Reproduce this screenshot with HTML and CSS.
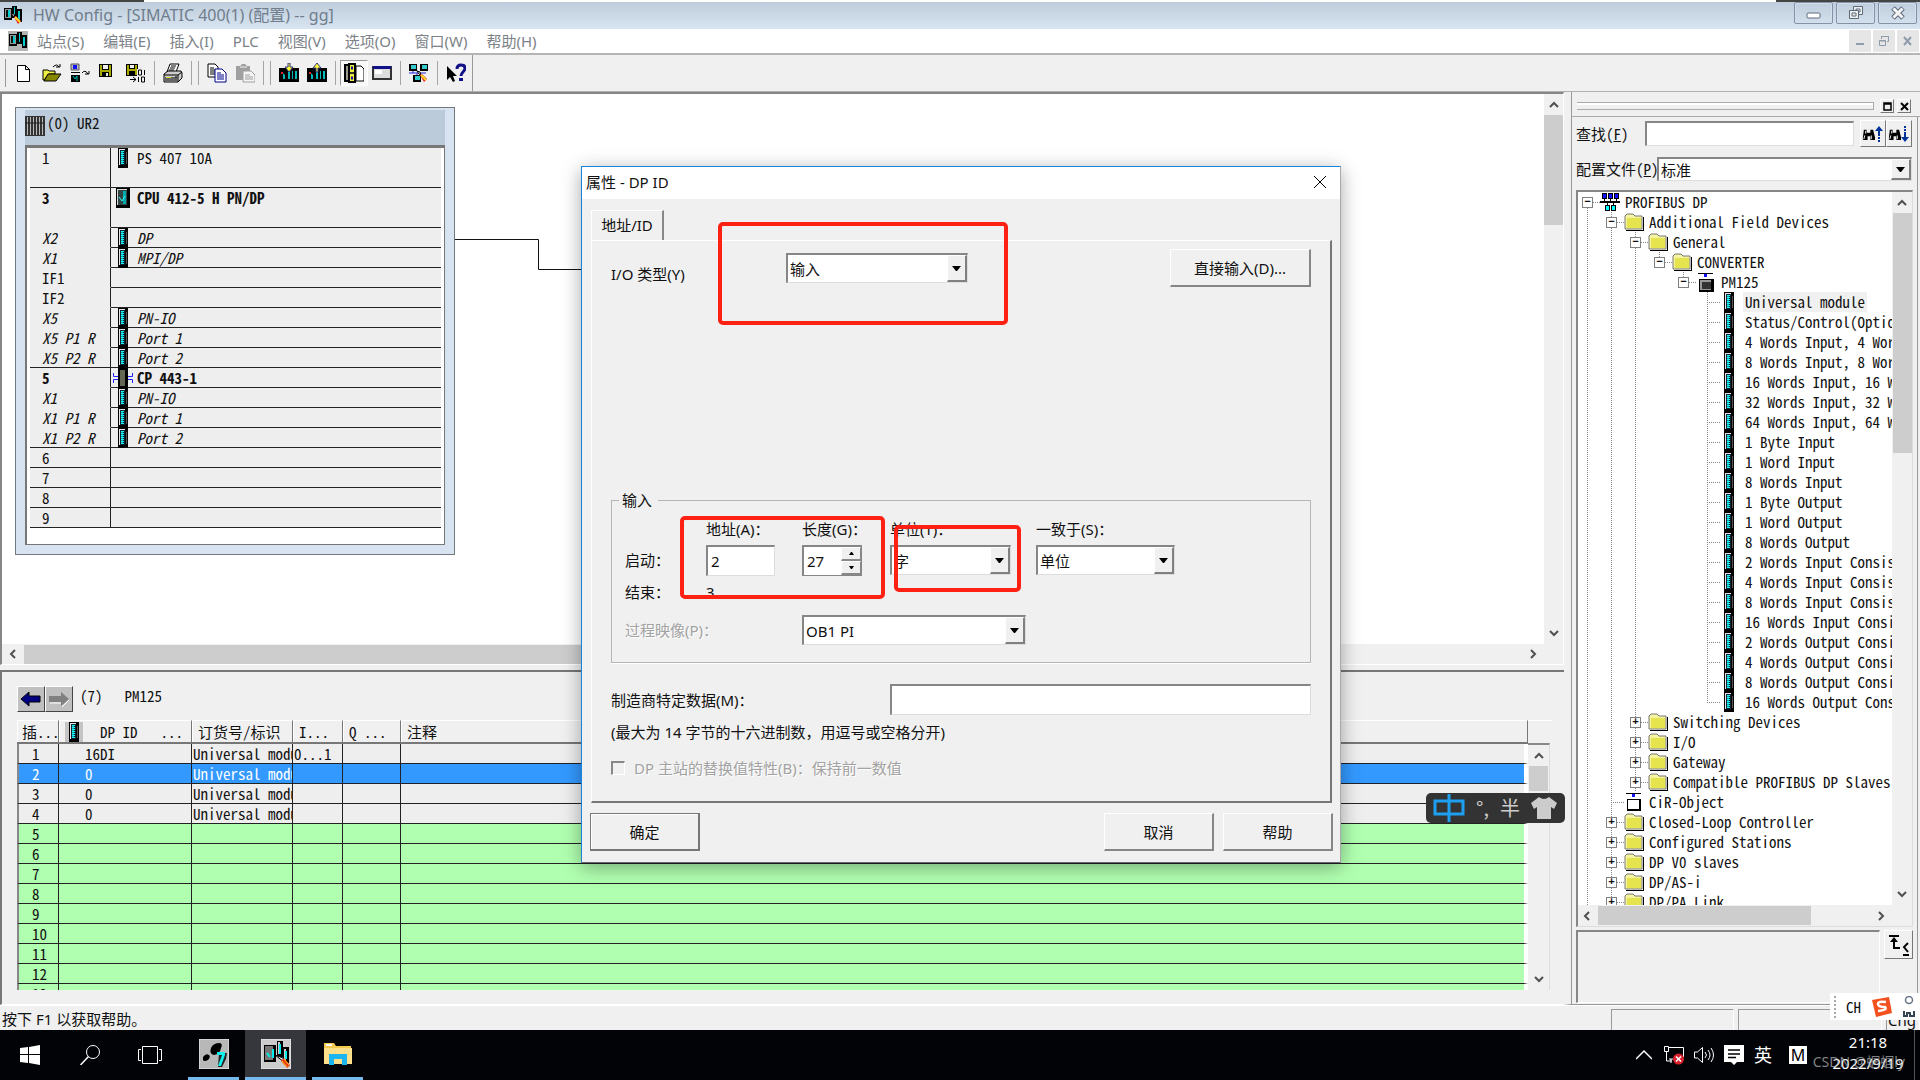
FILE: index.html
```html
<!DOCTYPE html>
<html lang="zh-CN">
<head>
<meta charset="utf-8">
<title>HW Config</title>
<link rel="stylesheet" href="styles.css">
</head>
<body>
<svg class="defs" aria-hidden="true">
  <symbol id="module" viewBox="0 0 10 20"><path d="M0 0h10v20H0z"/><path d="M1 1h6v16H1z" fill="#e8e8e8"/><path d="M2 2h5v15H2z" fill="#123"/><path d="M3 3h3v1H3zm0 2h3v1H3zm0 2h3v1H3zm0 2h3v1H3zm0 2h3v1H3zm0 2h3v1H3zm0 2h3v1H3z" fill="#1ff"/><path d="M3 4h2v1H3zm0 2h2v1H3zm0 2h2v1H3zm0 2h2v1H3zm0 2h2v1H3zm0 2h2v1H3z" fill="#1aa5a5"/><path d="M8 4h1v12H8z" fill="#555"/></symbol>
  <symbol id="cpu" viewBox="0 0 14 20"><path d="M0 0h14v20H0z"/><path d="M1 1h10v16H1z" fill="#d8d8d8"/><path d="M2 2h9v15H2z" fill="#344"/><path d="M7 3h3v13H7z" fill="#0aa"/><path d="M3 9l3 4 3-5" fill="none" stroke="#3ff" stroke-width="1"/></symbol>
  <symbol id="cp" viewBox="0 0 20 20"><path d="M0.500 5v3.500H5M0.500 15v-3.500H5M19.500 5v3.500H15M19.500 15v-3.500H15" fill="none" stroke="#22f" stroke-width="1"/><path d="M5 0h10v20H5z"/><path d="M7 2h5v16H7z" fill="#665"/></symbol>
  <symbol id="folder" viewBox="0 0 20 20"><path d="M2 18h17V5h1v14H2z"/><path d="M1 17V4l2-2h6l2 2h7v13z" fill="#f5f3a0" stroke="#777"/><path d="M3 6h14v10H3z" fill="#e5e34e"/></symbol>
  <symbol id="dpnet" viewBox="0 0 20 20"><path d="M2 1h5v6H2zM8 1h5v6H8zM14 1h5v6h-5zM0 9h20v2H0zM4 7h1v3H4zm6 0h1v3h-1zm6 0h1v3h-1zM7 11h1v3H7zm6 0h1v3h-1zM5 13h5v6H5zm6 0h5v6h-5z"/><path d="M3 2h3v4H3zM9 2h3v4H9zM15 2h3v4h-3z" fill="#11f"/><path d="M6 14h3v4H6zM12 14h3v4h-3z" fill="#0ff"/></symbol>
  <symbol id="slave" viewBox="0 0 20 20"><path d="M2 1h15v1H2zM3 7h15v13H3z"/><path d="M8 2h3v3H8z" fill="#11f"/><path d="M4 8h11v10H4z" fill="#999"/><path d="M6 10h9v7H6z" fill="#333"/></symbol>
  <symbol id="cir" viewBox="0 0 20 20"><path d="M2 1h15v1H2zM3 7h14v12H3z"/><path d="M8 2h3v3H8z" fill="#11f"/><path d="M4 8h11v9H4z" fill="#fff"/></symbol>
  <symbol id="up" viewBox="0 0 10 8"><path d="M1 6l4-4 4 4" fill="none" stroke="#505050" stroke-width="2"/></symbol>
  <symbol id="down" viewBox="0 0 10 8"><path d="M1 2l4 4 4-4" fill="none" stroke="#505050" stroke-width="2"/></symbol>
  <symbol id="left" viewBox="0 0 8 10"><path d="M6 1L2 5l4 4" fill="none" stroke="#505050" stroke-width="2"/></symbol>
  <symbol id="right" viewBox="0 0 8 10"><path d="M2 1l4 4-4 4" fill="none" stroke="#505050" stroke-width="2"/></symbol>
  <symbol id="drop" viewBox="0 0 9 5"><path d="M0 0h9L5 5H4z"/></symbol>
  <symbol id="hw" viewBox="0 0 20 20"><path d="M1 3h8v12H1zM9 1h5v12H9zM14 4h5v13h-5z"/><path d="M2 4h6v9H2z" fill="#999"/><path d="M3 5h4v7H3z" fill="#111"/><path d="M5 5h2v7H5zM11 2h1v9h-1zM15 6h2v9h-2z" fill="#0cc"/></symbol>
  <symbol id="pencil" viewBox="0 0 20 20"><path d="M8 8l3 1 1 3-2-1z" fill="#fff" stroke="#000"/><path d="M11 12l2-1 5 5-3 3z" fill="#e22"/><path d="M12 12l5 5" stroke="#fd2" stroke-width="2"/></symbol>
  <symbol id="chips" viewBox="0 0 20 14"><path d="M0 0h20v14H0z"/><path d="M2 4h2v2H2z" fill="#e22"/><path d="M4 5l2 2v4H4zM9 4h2v7H9zM13 3h1v8h-1zM16 3h2v8h-2z" fill="#0bb"/></symbol>
  <symbol id="glass" viewBox="0 0 14 14"><path d="M2 2h3v3h4V2h3l2 8v3H9V9H6v4H1v-3z"/><path d="M3 8l-1 4M10 8v4M4 3v3" stroke="#fff"/></symbol>
</svg>

<div class="app">
  <header class="titlebar">
    <svg class="i20" viewBox="0 0 20 20"><use href="#hw"/><use href="#pencil"/></svg>
    <h1>HW Config - [SIMATIC 400(1) (配置) -- gg]</h1>
    <div class="caption">
      <button aria-label="最小化"><svg width="16" height="14" viewBox="0 0 16 14"><rect x="1" y="7" width="13" height="5" rx="1" fill="#fff" stroke="#5d6b7b"/></svg></button>
      <button aria-label="还原"><svg width="16" height="14" viewBox="0 0 16 14" fill="#eee" stroke="#5d6b7b"><path d="M5.500.5h9v8h-9z"/><path d="M8 3h4v3H8z"/><path d="M1.500 4.500h9v8h-9z"/><path d="M4 7h4v3H4z"/></svg></button>
      <button aria-label="关闭"><svg width="16" height="14" viewBox="0 0 16 14"><path d="M3 2l10 10M13 2L3 12" stroke="#5d6b7b" stroke-width="5"/><path d="M3.500 2.500l9 9M12.500 2.500l-9 9" stroke="#f4f4f4" stroke-width="3"/></svg></button>
    </div>
  </header>

  <nav class="menubar">
    <svg class="menuicon" viewBox="0 0 20 20"><path d="M0 0h20v20H0z" fill="#b4b4b4"/><use href="#hw"/></svg>
    <a href="#">站点(S)</a><a href="#">编辑(E)</a><a href="#">插入(I)</a><a href="#">PLC</a><a href="#">视图(V)</a><a href="#">选项(O)</a><a href="#">窗口(W)</a><a href="#">帮助(H)</a>
    <div class="mdi">
      <button aria-label="最小化窗口"><svg width="12" height="12" viewBox="0 0 12 12"><path d="M2 8h8v2H2z" fill="#8e9cab"/></svg></button>
      <button aria-label="还原窗口"><svg width="12" height="12" viewBox="0 0 12 12" fill="none" stroke="#8e9cab"><path d="M3.500 4V1.500h7v5H9M3 1.500h8M1.500 5.500h6v5h-6zM1 6h7"/></svg></button>
      <button aria-label="关闭窗口"><svg width="12" height="12" viewBox="0 0 12 12"><path d="M2 2l7 8M9 2l-7 8" stroke="#8e9cab" stroke-width="2"/></svg></button>
    </div>
  </nav>

  <div class="toolbar" role="toolbar">
    <button aria-label="新建"><svg class="i20" viewBox="0 0 20 20"><path d="M3.500 2.500h8l4 4v12h-12zM11.500 2.500v4h4" fill="#fff" stroke="#000"/></svg></button>
    <button aria-label="打开"><svg class="i20" viewBox="0 0 20 20"><path d="M1 7h5l1 1h6v3H7l-5 6H1z" fill="#ee4" stroke="#000"/><path d="M2 18l4-7h13l-5 7z" fill="#880" stroke="#000"/><path d="M11 4q4-4 6 0M14 4h4V1" fill="none" stroke="#000"/></svg></button>
    <button aria-label="在线打开"><svg class="i20" viewBox="0 0 20 20"><path d="M1 1h8v6H1z" fill="#bbb" stroke="#555"/><path d="M3 2h4v4H3z" fill="#11f"/><path d="M1 9h9v1H1zM1 12h9v7H1z"/><path d="M3 13l2 3 2-3v5" stroke="#0bb" fill="none"/><path d="M12 10q3-4 6 1M15 11h4V8" fill="none" stroke="#000"/></svg></button>
    <button aria-label="保存"><svg class="i20" viewBox="0 0 20 20"><path d="M1 1h13v13H1z"/><path d="M2 2h11v11H2z" fill="#aa0"/><path d="M4 1h7v6H4zM4 9h7v5H4z"/><path d="M5 2h5v4H5zM8 10h2v3H8z" fill="#eee"/></svg></button>
    <button aria-label="保存并编译"><svg class="i20" viewBox="0 0 20 20"><path d="M0 1h12v12H0z"/><path d="M1 2h10v10H1z" fill="#aa0"/><path d="M3 1h6v5H3zM3 8h6v5H3z"/><path d="M4 2h4v3H4z" fill="#eee"/><path d="M11 6h9v14h-9z" fill="#f0f0f0"/><path d="M12.500 7h3v5h-3zM18.500 7v5M12.500 14v5M15.500 14h3v5h-3zM4 16.500h6M7 14l3 2.500L7 19" fill="none" stroke="#000"/></svg></button>
    <i class="sep"></i>
    <button aria-label="打印"><svg class="i20" viewBox="0 0 20 20"><path d="M7 1h9l-3 8H4z" fill="#fff" stroke="#000"/><path d="M8 3h5M7 5h5M6 7h5" stroke="#000"/><path d="M1 11l4-3h13l1 2v5l-4 4H1z" fill="#ccc" stroke="#000"/><path d="M1 12h14l4-3M15 12v7M2 15h12M2 17h12M12 14h2" stroke="#000" fill="none"/><path d="M3 14h5v1H3z" fill="#dd2"/></svg></button>
    <i class="sep double"></i>
    <button aria-label="复制"><svg class="i20" viewBox="0 0 20 20"><path d="M1 1h7l3 3v10H1z" fill="#fff" stroke="#000"/><path d="M3 5h4M3 7h6M3 9h6M3 11h5" stroke="#000"/><path d="M8 6h7l4 4v9H8z" fill="#fff" stroke="#008" /><path d="M10 10h4M10 12h7M10 14h7M10 16h7" stroke="#008"/></svg></button>
    <button aria-label="粘贴" disabled><svg class="i20" viewBox="0 0 20 20"><path d="M1 3h4l2-2h3l2 2h3v14H1z" fill="#a0a0a0"/><path d="M5 4h7" stroke="#eee"/><path d="M8 8h8l4 4v7H8z" fill="#f4f4f4" stroke="#a0a0a0"/><path d="M10 12h5M10 14h8M10 16h8" stroke="#a0a0a0"/></svg></button>
    <i class="sep double"></i>
    <button aria-label="下载"><svg class="i20" viewBox="0 0 20 20"><use href="#chips" y="5" width="20" height="14"/><path d="M9 0h2v4h3l-4 5-4-5h3z" fill="#ff3" stroke="#338"/></svg></button>
    <button aria-label="上传"><svg class="i20" viewBox="0 0 20 20"><use href="#chips" y="5" width="20" height="14"/><path d="M9 9h2V5h3l-4-5-4 5h3z" fill="#ff3" stroke="#338"/></svg></button>
    <i class="sep"></i>
    <button class="pressed" aria-label="目录"><svg class="i20" viewBox="0 0 20 20"><path d="M1 2h4v16H1z" fill="#998" stroke="#000" stroke-width="2"/><path d="M5 1h6v18H5z" fill="#ee3" stroke="#000" stroke-width="2"/><path d="M7 5h2M7 15h2" stroke="#11a" stroke-width="3"/><path d="M6 9h4v2H6z" fill="#333"/><path d="M12 3h5l3 3v12h-8z" fill="#fff" stroke="#000"/></svg></button>
    <button aria-label="窗口"><svg class="i20" viewBox="0 0 20 20"><path d="M1 4h18v12H1z" fill="#ddd" stroke="#333" stroke-width="2"/><path d="M1 3h18v3H1z" fill="#118"/><path d="M3 7h7v4H3z" fill="#fff"/></svg></button>
    <i class="sep"></i>
    <button aria-label="网络"><svg class="i20" viewBox="0 0 20 20"><path d="M0 1h8v7H0zM11 1h8v7h-8zM4 12h8v7H4z"/><path d="M2 2h5v4H2zM13 2h5v4h-5zM6 13h5v4H6z" fill="#3cc"/><path d="M0 10h17M8 10v2M4 8v2" stroke="#22d"/><use href="#pencil"/></svg></button>
    <i class="sep"></i>
    <button aria-label="帮助"><svg class="i20" viewBox="0 0 20 20"><path d="M1 3v14l3-3 3 5 2-1-2-5h4z"/><path d="M11 6q0-4 4-4t4 3q0 2-2 4t-2 4" fill="none" stroke="#118" stroke-width="3"/><path d="M13 15h4v3h-4z" fill="#118"/></svg></button>
  </div>

  <div class="main">
    <div class="left">
      <section class="station">
        <div class="canvas">
          <svg class="bus" viewBox="0 0 130 40"><path d="M0 5.500h84.500v30H130" fill="none" stroke="#111"/></svg>
          <div class="rack">
            <div class="racktitle"><svg width="20" height="20" viewBox="0 0 20 20"><path d="M0 0h20v20H0z" fill="#333"/><path d="M2.500 1v18M5.500 1v18M8.500 1v18M11.500 1v18M14.500 1v18M17.500 1v18" stroke="#bbb"/><path d="M0 7h20" stroke="#222"/></svg><span>(0) UR2</span></div>
            <div class="rackbody">
              <table>
                <tr class="tall end"><td>1</td><td><svg class="mod"><use href="#module"/></svg>PS 407 10A</td></tr>
                <tr class="tall b"><td>3</td><td><svg class="mod"><use href="#cpu"/></svg>CPU 412-5 H PN/DP</td></tr>
                <tr class="it"><td>X2</td><td><svg class="mod"><use href="#module"/></svg>DP</td></tr>
                <tr class="it"><td>X1</td><td><svg class="mod"><use href="#module"/></svg>MPI/DP</td></tr>
                <tr><td>IF1</td><td></td></tr>
                <tr><td>IF2</td><td></td></tr>
                <tr class="it"><td>X5</td><td><svg class="mod"><use href="#module"/></svg>PN-IO</td></tr>
                <tr class="it"><td>X5 P1 R</td><td><svg class="mod"><use href="#module"/></svg>Port 1</td></tr>
                <tr class="it end"><td>X5 P2 R</td><td><svg class="mod"><use href="#module"/></svg>Port 2</td></tr>
                <tr class="b"><td>5</td><td><svg class="mod"><use href="#cp"/></svg>CP 443-1</td></tr>
                <tr class="it"><td>X1</td><td><svg class="mod"><use href="#module"/></svg>PN-IO</td></tr>
                <tr class="it"><td>X1 P1 R</td><td><svg class="mod"><use href="#module"/></svg>Port 1</td></tr>
                <tr class="it end"><td>X1 P2 R</td><td><svg class="mod"><use href="#module"/></svg>Port 2</td></tr>
                <tr class="end"><td>6</td><td></td></tr>
                <tr class="end"><td>7</td><td></td></tr>
                <tr class="end"><td>8</td><td></td></tr>
                <tr class="end"><td>9</td><td></td></tr>
              </table>
            </div>
          </div>
        </div>
        <div class="vbar"><svg class="va"><use href="#up"/></svg><div class="thumb t110"></div><svg class="va last"><use href="#down"/></svg></div>
        <div class="hbar"><svg class="ha"><use href="#left"/></svg><div class="thumb wide"></div><svg class="ha last"><use href="#right"/></svg></div>
      </section>

      <section class="detail">
        <div class="nav">
          <button aria-label="后退"><svg width="20" height="16" viewBox="0 0 20 16"><path d="M0 8l8-7v4h11v6H8v4z" fill="#000080" stroke="#000"/></svg></button>
          <button aria-label="前进"><svg width="20" height="16" viewBox="0 0 20 16"><path d="M20 8l-8-7v4H0v6h12v4z" fill="#808080"/><path d="M20 9l-7 7M1 12h11" stroke="#fff"/></svg></button>
          <span>(7)</span><span>PM125</span>
        </div>
        <div class="list">
          <div class="listview">
            <table>
              <colgroup><col class="c1"><col class="c2"><col class="c3"><col class="c4"><col class="c5"><col></colgroup>
              <thead><tr><th>插...</th><th><span class="dpid"><svg class="hm"><use href="#module"/></svg><span>DP ID</span><span>...</span></span></th><th>订货号/标识</th><th>I...</th><th>Q ...</th><th>注释</th></tr></thead>
              <tbody>
                <tr><td>1</td><td>16DI</td><td>Universal module</td><td>0...1</td><td></td><td></td></tr>
                <tr class="sel"><td>2</td><td>0</td><td>Universal module</td><td></td><td></td><td></td></tr>
                <tr><td>3</td><td>0</td><td>Universal module</td><td></td><td></td><td></td></tr>
                <tr><td>4</td><td>0</td><td>Universal module</td><td></td><td></td><td></td></tr>
                <tr class="g"><td>5</td><td></td><td></td><td></td><td></td><td></td></tr>
                <tr class="g"><td>6</td><td></td><td></td><td></td><td></td><td></td></tr>
                <tr class="g"><td>7</td><td></td><td></td><td></td><td></td><td></td></tr>
                <tr class="g"><td>8</td><td></td><td></td><td></td><td></td><td></td></tr>
                <tr class="g"><td>9</td><td></td><td></td><td></td><td></td><td></td></tr>
                <tr class="g"><td>10</td><td></td><td></td><td></td><td></td><td></td></tr>
                <tr class="g"><td>11</td><td></td><td></td><td></td><td></td><td></td></tr>
                <tr class="g"><td>12</td><td></td><td></td><td></td><td></td><td></td></tr>
                <tr class="g"><td>13</td><td></td><td></td><td></td><td></td><td></td></tr>
              </tbody>
            </table>
          </div>
          <div class="listbar"><div class="vbar"><svg class="va"><use href="#up"/></svg><div class="thumb t25"></div><svg class="va last"><use href="#down"/></svg></div></div>
        </div>
      </section>
    </div>

    <aside class="catalog">
      <div class="grip"><div class="bars"></div>
        <button aria-label="停靠"><svg width="9" height="9" viewBox="0 0 9 9"><path d="M1 1h7v7H1zM1 2h7" fill="none" stroke="#000" stroke-width="1.500"/></svg></button>
        <button aria-label="关闭目录"><svg width="9" height="9" viewBox="0 0 9 9"><path d="M1 1l7 7M8 1L1 8" stroke="#000" stroke-width="2"/></svg></button>
      </div>
      <div class="catbody">
        <div class="find"><label for="find">查找(<u>F</u>)</label><input id="find" type="text">
          <button aria-label="向上查找"><svg width="22" height="18" viewBox="0 0 22 18"><use href="#glass" y="3" width="13" height="13"/><path d="M17 1l4 5h-3v5h-2V6h-3zM16 12h2v2h-2zM16 15h2v2h-2z" fill="#039"/></svg></button><button aria-label="向下查找"><svg width="22" height="18" viewBox="0 0 22 18"><use href="#glass" y="3" width="13" height="13"/><path d="M17 17l4-5h-3V7h-2v5h-3zM16 1h2v2h-2zM16 4h2v2h-2z" fill="#039"/></svg></button></div>
        <div class="profile"><label for="prof">配置文件(<u>P</u>)</label><span class="combo"><select id="prof"><option>标准</option></select><i><svg width="9" height="5"><use href="#drop"/></svg></i></span></div>
        <div class="treebox">
          <div class="treeview">
            <ul class="tree">
              <li><div class="row"><b class="ex">−</b><i class="dots"></i><svg class="ti"><use href="#dpnet"/></svg><span>PROFIBUS DP</span></div>
                <ul>
                  <li><div class="row"><b class="ex">−</b><i class="dots"></i><svg class="ti"><use href="#folder"/></svg><span>Additional Field Devices</span></div>
                    <ul>
                      <li><div class="row"><b class="ex">−</b><i class="dots"></i><svg class="ti"><use href="#folder"/></svg><span>General</span></div>
                        <ul class="only">
                          <li><div class="row"><b class="ex">−</b><i class="dots"></i><svg class="ti"><use href="#folder"/></svg><span>CONVERTER</span></div>
                            <ul class="only">
                              <li><div class="row"><b class="ex">−</b><i class="dots"></i><svg class="ti"><use href="#slave"/></svg><span>PM125</span></div>
                                <ul class="leaves">
                                  <li class="row"><i class="dots"></i><svg class="tm"><use href="#module"/></svg><span class="cur">Universal module</span></li>
                                  <li class="row"><i class="dots"></i><svg class="tm"><use href="#module"/></svg><span>Status/Control(Optional)</span></li>
                                  <li class="row"><i class="dots"></i><svg class="tm"><use href="#module"/></svg><span>4 Words Input, 4 Words Output</span></li>
                                  <li class="row"><i class="dots"></i><svg class="tm"><use href="#module"/></svg><span>8 Words Input, 8 Words Output</span></li>
                                  <li class="row"><i class="dots"></i><svg class="tm"><use href="#module"/></svg><span>16 Words Input, 16 Words Output</span></li>
                                  <li class="row"><i class="dots"></i><svg class="tm"><use href="#module"/></svg><span>32 Words Input, 32 Words Output</span></li>
                                  <li class="row"><i class="dots"></i><svg class="tm"><use href="#module"/></svg><span>64 Words Input, 64 Words Output</span></li>
                                  <li class="row"><i class="dots"></i><svg class="tm"><use href="#module"/></svg><span>1 Byte Input</span></li>
                                  <li class="row"><i class="dots"></i><svg class="tm"><use href="#module"/></svg><span>1 Word Input</span></li>
                                  <li class="row"><i class="dots"></i><svg class="tm"><use href="#module"/></svg><span>8 Words Input</span></li>
                                  <li class="row"><i class="dots"></i><svg class="tm"><use href="#module"/></svg><span>1 Byte Output</span></li>
                                  <li class="row"><i class="dots"></i><svg class="tm"><use href="#module"/></svg><span>1 Word Output</span></li>
                                  <li class="row"><i class="dots"></i><svg class="tm"><use href="#module"/></svg><span>8 Words Output</span></li>
                                  <li class="row"><i class="dots"></i><svg class="tm"><use href="#module"/></svg><span>2 Words Input Consistent</span></li>
                                  <li class="row"><i class="dots"></i><svg class="tm"><use href="#module"/></svg><span>4 Words Input Consistent</span></li>
                                  <li class="row"><i class="dots"></i><svg class="tm"><use href="#module"/></svg><span>8 Words Input Consistent</span></li>
                                  <li class="row"><i class="dots"></i><svg class="tm"><use href="#module"/></svg><span>16 Words Input Consistent</span></li>
                                  <li class="row"><i class="dots"></i><svg class="tm"><use href="#module"/></svg><span>2 Words Output Consistent</span></li>
                                  <li class="row"><i class="dots"></i><svg class="tm"><use href="#module"/></svg><span>4 Words Output Consistent</span></li>
                                  <li class="row"><i class="dots"></i><svg class="tm"><use href="#module"/></svg><span>8 Words Output Consistent</span></li>
                                  <li class="row"><i class="dots"></i><svg class="tm"><use href="#module"/></svg><span>16 Words Output Consistent</span></li>
                                </ul>
                              </li>
                            </ul>
                          </li>
                        </ul>
                      </li>
                      <li class="row"><b class="ex">+</b><i class="dots"></i><svg class="ti"><use href="#folder"/></svg><span>Switching Devices</span></li>
                      <li class="row"><b class="ex">+</b><i class="dots"></i><svg class="ti"><use href="#folder"/></svg><span>I/O</span></li>
                      <li class="row"><b class="ex">+</b><i class="dots"></i><svg class="ti"><use href="#folder"/></svg><span>Gateway</span></li>
                      <li class="row"><b class="ex">+</b><i class="dots"></i><svg class="ti"><use href="#folder"/></svg><span>Compatible PROFIBUS DP Slaves</span></li>
                    </ul>
                  </li>
                  <li class="row"><i class="dots solo"></i><svg class="ti"><use href="#cir"/></svg><span>CiR-Object</span></li>
                  <li class="row"><b class="ex">+</b><i class="dots"></i><svg class="ti"><use href="#folder"/></svg><span>Closed-Loop Controller</span></li>
                  <li class="row"><b class="ex">+</b><i class="dots"></i><svg class="ti"><use href="#folder"/></svg><span>Configured Stations</span></li>
                  <li class="row"><b class="ex">+</b><i class="dots"></i><svg class="ti"><use href="#folder"/></svg><span>DP V0 slaves</span></li>
                  <li class="row"><b class="ex">+</b><i class="dots"></i><svg class="ti"><use href="#folder"/></svg><span>DP/AS-i</span></li>
                  <li class="row"><b class="ex">+</b><i class="dots"></i><svg class="ti"><use href="#folder"/></svg><span>DP/PA Link</span></li>
                </ul>
              </li>
            </ul>
          </div>
          <div class="vbar"><svg class="va"><use href="#up"/></svg><div class="thumb t240"></div><svg class="va last"><use href="#down"/></svg></div>
          <div class="hbar"><svg class="ha"><use href="#left"/></svg><div class="thumb w213"></div><svg class="ha last"><use href="#right"/></svg></div>
        </div>
        <div class="info"><div class="infotext"></div><button aria-label="切换目录"><svg width="22" height="22" viewBox="0 0 22 22"><path d="M1 1h10v2H1zM6 3l4 5H7v5h5v2H5V8H2z"/><path d="M20 9l-4 4 4 5M15 21h6" fill="none" stroke="#000" stroke-width="2"/></svg></button></div>
      </div>
    </aside>
  </div>

  <footer class="status"><span>按下 F1 以获取帮助。</span><div class="cell s1"></div><div class="cell s2"></div><div class="cell s3">Chg</div></footer>

  <div class="taskbar">
    <button class="tb" aria-label="开始"><svg width="20" height="20" viewBox="0 0 20 20"><path d="M0 3l8-1v7H0zM9 2l11-2v9H9zM0 10h8v8l-8-1zM9 10h11v10L9 18z" fill="#fff"/></svg></button>
    <button class="tb" aria-label="搜索"><svg width="20" height="20" viewBox="0 0 20 20"><circle cx="13" cy="7" r="6.500" fill="none" stroke="#fff"/><path d="M8.500 11.500L.5 20" stroke="#fff" stroke-width="1.500"/></svg></button>
    <button class="tb" aria-label="任务视图"><svg width="24" height="20" viewBox="0 0 24 20"><path d="M4.500 1.500h15v17h-15zM3 4.500H.5v11H3M21 4.500h2.500v11H21" fill="none" stroke="#fff"/></svg></button>
    <button class="tb run first" aria-label="SIMATIC Manager"><svg width="30" height="30" viewBox="0 0 30 30"><path d="M0 0h30v30H0z" fill="#b8b8b8" stroke="#eee"/><path d="M12 9q2-5 9-5 3 1 1 5-1 6-7 7-5-1-3-7zM4 18q3-4 6-2 2 2-1 5-4 2-5 0z"/><path d="M20 14h8l-1 6-4 8h-4z" fill="#222"/><path d="M18 13h8v3l-4 11h-3l4-11h-5z" fill="#1ee"/></svg></button>
    <button class="tb run active" aria-label="HW Config"><svg width="30" height="30" viewBox="0 0 30 30"><path d="M0 0h30v30H0z" fill="#ccc" stroke="#eee"/><path d="M3 6h12v17H3zM16 2h6v16h-6zM22 8h6v16h-6z"/><path d="M4 7h8v14H4z" fill="#777"/><path d="M17 3h2v12h-2zM23 10h2v12h-2z" fill="#ccc"/><path d="M6 14l3 4M12 10v9M19 5v10M25 12v8" stroke="#0ee" stroke-width="2"/><path d="M14 16l8 3 1 4z" fill="#fff" stroke="#000"/><path d="M20 22l3-3 6 7-3 3z" fill="#e31"/><path d="M21 22l5 6M23 20l5 6" stroke="#fc2"/></svg></button>
    <button class="tb run" aria-label="文件资源管理器"><svg width="28" height="24" viewBox="0 0 28 24"><path d="M0 1h10l2 3h15v18H0z" fill="#f5c94e"/><path d="M0 6h28v16H0z" fill="#ffe08a"/><path d="M2 2h6v2H2z" fill="#fff"/><path d="M5 23V12h18v11h-5v-6h-8v6z" fill="#1cb5f0"/></svg></button>
    <div class="tray">
      <svg width="16" height="20" viewBox="0 0 16 20"><path d="M0 14l8-8 8 8" fill="none" stroke="#fff" stroke-width="1.500"/></svg>
      <svg width="20" height="20" viewBox="0 0 20 20"><path d="M.5 1.500h4v5h-4zM2.500 7v9H8M5 2.500h14.500V12M5 14h5M7 14v4" fill="none" stroke="#fff"/><circle cx="14.500" cy="14" r="5.500" fill="#d9202c"/><path d="M12 11.500l5 5M17 11.500l-5 5" stroke="#fff" stroke-width="1.500"/></svg>
      <svg width="20" height="20" viewBox="0 0 20 20"><path d="M.5 7h3l5-4.500v15L3.500 13h-3zM11 7q3 3 0 6M14 5q4 5 0 10M17 3q5 7 0 14" fill="none" stroke="#fff"/></svg>
      <svg width="20" height="20" viewBox="0 0 20 20"><path d="M0 0h20v17h-7l-3 3-3-3H0z" fill="#fff"/><path d="M4 5h12M4 9h12M4 12.500h8" stroke="#000" stroke-width="1.500"/></svg>
      <span class="lang">英</span>
      <span class="m">M</span>
      <div class="clock"><time>21:18</time><time>2022/9/19</time></div>
    </div>
  </div>
</div>

<div class="dialog" role="dialog" aria-label="属性 - DP ID">
  <div class="dtitle"><h2>属性 - DP ID</h2><button aria-label="关闭对话框"><svg width="14" height="14" viewBox="0 0 14 14"><path d="M1 1l12 12M13 1L1 13" stroke="#000"/></svg></button></div>
  <div class="dbody">
    <button class="tab">地址/ID</button>
    <div class="panel">
      <div class="r1"><label for="io">I/O 类型(Y)</label><span class="combo"><select id="io"><option>输入</option></select><i><svg width="9" height="5"><use href="#drop"/></svg></i></span><button class="btn">直接输入(D)...</button></div>
      <fieldset>
        <legend>输入</legend>
        <div class="grid">
          <label class="top a" for="addr">地址(A)：</label><label class="top" for="len">长度(G)：</label><label class="top" for="unit">单位(T)：</label><label class="top" for="cons">一致于(S)：</label>
          <span>启动：</span><input id="addr" class="addr" type="text" value="2">
          <span class="spin"><input id="len" type="text" value="27"><span><button aria-label="增加"><svg width="5" height="3" viewBox="0 0 5 3"><path d="M0 3h5L3 0H2z"/></svg></button><button aria-label="减少"><svg width="5" height="3" viewBox="0 0 5 3"><path d="M0 0h5L3 3H2z"/></svg></button></span></span>
          <span class="combo unit"><select id="unit"><option>字</option></select><i><svg width="9" height="5"><use href="#drop"/></svg></i></span>
          <span class="combo cons"><select id="cons"><option>单位</option></select><i><svg width="9" height="5"><use href="#drop"/></svg></i></span>
          <span>结束：</span><span class="end">3</span>
          <label class="dis wide" for="pi">过程映像(P)：</label><span class="combo pi"><select id="pi"><option>OB1 PI</option></select><i><svg width="9" height="5"><use href="#drop"/></svg></i></span>
        </div>
      </fieldset>
      <div class="vendor"><label for="vd">制造商特定数据(M)：</label><input id="vd" type="text"></div>
      <p>(最大为 14 字节的十六进制数，用逗号或空格分开)</p>
      <label class="check dis"><input type="checkbox" disabled>DP 主站的替换值特性(B)：保持前一数值</label>
    </div>
    <div class="dbtns"><button class="btn ok">确定</button><button class="btn">取消</button><button class="btn">帮助</button></div>
  </div>
  <div class="mark m1"></div><div class="mark m2"></div><div class="mark m3"></div>
</div>

<div class="ime"><svg width="32" height="28" viewBox="0 0 32 28"><path d="M2 7h28v13H2zM16 0v28" fill="none" stroke="#1e9ff2" stroke-width="3"/></svg><span>°,</span><span>半</span><svg width="26" height="22" viewBox="0 0 26 22"><path d="M8 0q5 4 10 0l8 6-3 6-3-2v12H6V10l-3 2-3-6z" fill="#ccc"/></svg></div>
<div class="sogou"><i></i><span>CH</span><svg width="22" height="22" viewBox="0 0 22 22"><path d="M1 4l17-3 3 16-16 4z" fill="#f4511e"/><path d="M15 6q-8-1-8 2t7 3q3 3-7 4" fill="none" stroke="#fff" stroke-width="2.500"/></svg><svg width="12" height="22" viewBox="0 0 12 22"><circle cx="6" cy="4" r="3.500" fill="none" stroke="#678" stroke-width="1.500"/><path d="M1 15v5h3v-3h3v3h4v-5" fill="none" stroke="#345" stroke-width="2"/></svg></div>
<div class="watermark">CSDN @蝈蝈ly</div>
</body>
</html>
```
FILE: styles.css
```css
:root {
  --face: #f0f0f0;
  --shade: #868686;
  --ui: "Noto Sans", "Noto Sans CJK SC", sans-serif;
  --song: "Noto Sans Mono CJK SC", "Liberation Mono", "Noto Sans CJK SC", monospace;
}
* { box-sizing: border-box; }
body { margin: 0; height: 100vh; overflow: hidden; background: var(--face); font: 15px/20px var(--ui); color: #111; }
button, input, select { font: inherit; color: inherit; margin: 0; padding: 0; border: 0; background: none; border-radius: 0; }
ul { list-style: none; margin: 0; padding: 0; }
h1, h2, p { margin: 0; font: inherit; }
table { border-collapse: separate; border-spacing: 0; }
a { color: inherit; text-decoration: none; }
svg { flex: none; display: block; }
.defs { position: absolute; width: 0; height: 0; }
.i20 { width: 20px; height: 20px; }
.app { height: 100vh; display: flex; flex-direction: column; }

.titlebar { height: 29px; flex: none; display: flex; align-items: center; gap: 10px; padding: 0 3px; color: #6f7d8c;
  background: linear-gradient(90deg, #444 144px, #fff 144px calc(100% - 144px), #444 calc(100% - 144px)) 0 0 / 100% 2px no-repeat, linear-gradient(#bccbda, #d8e4f1); }
.titlebar h1 { font-size: 16px; }
.caption { margin-left: auto; display: flex; gap: 3px; align-self: flex-start; padding-top: 2px; }
.caption button { width: 39px; height: 22px; border: 1px solid #8492a8; border-radius: 2px; box-shadow: inset 0 0 0 1px #d4dfeb; display: grid; place-items: center; }

.menubar { height: 26px; flex: none; display: flex; align-items: center; gap: 19px; background: #fff; border-bottom: 2px solid #b5b5b5; padding-left: 8px; color: #7c8288; }
.menuicon { width: 20px; height: 20px; margin-right: -10px; }
.mdi { margin-left: auto; display: flex; gap: 2px; padding-right: 1px; }
.mdi button { width: 22px; height: 22px; background: #e6e6e6; display: grid; place-items: center; }

.toolbar { height: 37px; flex: none; display: flex; align-items: center; padding-left: 3px; border-bottom: 1px solid #b0b0b0; }
.toolbar::before { content: ""; width: 2px; height: 28px; border-right: 1px solid #999; margin-right: 4px; }
.toolbar::after { content: ""; width: 2px; align-self: stretch; border-left: 1px solid #999; margin-left: 2px; }
.toolbar button { width: 28px; height: 26px; display: grid; place-items: center; }
.toolbar .pressed { background: #f8f8f8; border: 1px solid; border-color: #999 #fff #fff #999; }
.sep { width: 1px; height: 24px; background: #a5a5a5; margin: 0 4px; }
.sep.double { width: 8px; background: none; border: solid #a5a5a5; border-width: 0 1px; }

.main { flex: 1; min-height: 0; display: flex; }
.left { flex: 1; min-width: 0; display: flex; flex-direction: column; gap: 5px; }
.station { flex: 573 1 573px; min-height: 0; display: grid; grid-template: minmax(0, 1fr) 20px / minmax(0, 1fr) 19px; border: solid var(--shade); border-width: 2px 1px 1px 2px; border-right-color: #fff; border-bottom-color: #fff; background: var(--face); }
.canvas { position: relative; overflow: hidden; background: #fff; }
.vbar { display: flex; flex-direction: column; align-items: center; padding: 7px 0; background: var(--face); }
.hbar { display: flex; align-items: center; padding: 0 7px; background: var(--face); }
.va { width: 12px; height: 8px; }
.ha { width: 8px; height: 12px; }
.va.last { margin-top: auto; }
.ha.last { margin-left: auto; }
.thumb { background: #cdcdcd; width: 19px; margin-top: 6px; }
.hbar .thumb { height: 19px; margin: 0 0 0 7px; }
.t110 { height: 110px; } .t25 { height: 25px; } .t240 { height: 240px; }
.w213 { width: 213px; } .wide { width: 60%; }

.bus { position: absolute; left: 452px; top: 140px; width: 130px; height: 40px; }
.rack { position: absolute; left: 13px; top: 13px; width: 440px; padding: 2px 9px 9px; border: 1px solid #707880; background: #d8e3f1; font: 15px/20px var(--song); }
.racktitle { height: 35px; padding: 6px 0; display: flex; gap: 2px; background: #bccbda; line-height: 14px; }
.rackbody { border: 2px solid #777; border-width: 3px 1px 1px 2px; background: #fff; padding: 0 3px 16px 3px; }
.rackbody table { width: 100%; }
.rackbody td { height: 20px; padding: 0; background: #eee; border-bottom: 1px solid #222; line-height: 19px; vertical-align: top; white-space: pre; }
.rackbody td:first-child { width: 81px; padding-left: 12px; border-right: 1px solid #222; border-bottom-color: #eee; }
.rackbody .end td:first-child { border-bottom-color: #222; }
.rackbody .tall td { height: 40px; }
.rackbody .b { font-weight: bold; }
.rackbody .it { font-style: italic; }
.mod { float: left; width: 20px; height: 20px; margin: 0 4px -1px 2px; }

.detail { flex: 335 1 335px; min-height: 0; display: flex; flex-direction: column; gap: 8px; padding: 14px 12px 14px 15px; border: solid #777; border-width: 2px 0 1px 2px; border-bottom-color: #fff; font-family: var(--song); }
.nav { display: flex; align-items: flex-start; height: 26px; }
.nav button { width: 28px; height: 26px; background: #c0c0c0; border: 1px solid; border-color: #fff #444 #444 #fff; display: grid; place-items: center; }
.nav span { margin-left: 7px; }
.nav span + span { margin-left: 22px; }
.list { flex: 1; min-height: 0; display: flex; }
.listview { flex: 1; min-width: 0; overflow: hidden; }
.listview table { width: 100%; table-layout: fixed; }
.c1 { width: 42px; } .c2 { width: 133px; } .c3 { width: 101px; } .c4 { width: 50px; } .c5 { width: 58px; }
.listview th { height: 24px; padding: 0 0 0 6px; text-align: left; font-weight: normal; border: solid #777; border-width: 0 1px 2px 0; border-top: 1px solid #fff; box-shadow: inset 1px 0 #fff; overflow: hidden; white-space: nowrap; }
.listview th:first-child { padding-left: 5px; }
.dpid { display: flex; gap: 23px; }
.hm { width: 18px; height: 20px; background: #c4c4c4; margin-right: -6px; }
.listview td { height: 20px; padding: 0 0 0 1px; line-height: 19px; border: solid #222; border-width: 0 1px 1px 0; background: #eee; overflow: hidden; white-space: nowrap; }
.listview td:first-child { padding-left: 13px; border-left: 2px solid #888; }
.listview td:nth-child(2) { padding-left: 26px; }
.listview td:last-child { border-right: 4px solid #fff; }
.listview .sel td { background: #3399ff; color: #fff; }
.listview .g td { background: #b0ffb0; }
.listbar { width: 24px; padding: 22px 2px 0 0; border-top: 1px solid #fff; display: flex; }
.listbar .vbar { flex: 1; border: solid #888; border-width: 2px 1px 0 0; border-right-color: #ddd; }

.catalog { width: 356px; flex: none; display: flex; flex-direction: column; margin: 0; border-left: 7px solid var(--face); border-bottom: 1px solid #999; }
.grip { height: 25px; display: flex; align-items: center; gap: 3px; padding: 4px 9px 0 5px; border-left: 1px solid #999; border-bottom: 1px solid #aaa; }
.bars { flex: 1; height: 8px; border: solid #aaa; border-width: 1px 1px 1px 0; margin-right: 3px; box-shadow: inset 0 2px #fff; }
.grip button { width: 14px; height: 14px; border: 1px solid; border-color: #fff #777 #777 #fff; display: grid; place-items: center; }
.catbody { flex: 1; min-height: 0; display: flex; flex-direction: column; margin-right: 2px; padding: 3px 4px 1px 4px; border: solid #999; border-width: 0 1px; font-family: var(--song); }
.find { display: flex; align-items: center; height: 27px; }
.find label { width: 69px; }
.find input { flex: 1; min-width: 0; height: 25px; padding: 0 4px; background: #fff; border: solid var(--shade); border-width: 2px 1px 1px 2px; border-right-color: #ddd; border-bottom-color: #ddd; margin-right: 6px; }
.find button, .info button { width: 26px; height: 27px; border: 1px solid; border-color: #fff #777 #777 #fff; display: grid; place-items: center; }
.profile { display: flex; align-items: center; height: 24px; margin: 10px 0 9px; }
.profile label { width: 81px; overflow: hidden; white-space: nowrap; }
.profile .combo { flex: 1; height: 24px; }
.find, .profile { margin-right: 1px; }

.combo { display: flex; height: 30px; background: #fff; border: solid var(--shade); border-width: 2px 1px 1px 2px; border-right-color: #ddd; border-bottom-color: #ddd; }
.combo select { flex: 1; min-width: 0; appearance: none; padding-left: 2px; outline: 0; }
.combo i { width: 20px; background: var(--face); border: solid; border-width: 1px 2px 2px 1px; border-color: #fff #808080 #808080 #fff; display: grid; place-items: center; }

.treebox { flex: 1; min-height: 0; display: grid; grid-template: minmax(0, 1fr) 21px / minmax(0, 1fr) 20px; border: solid var(--shade); border-width: 2px 1px 1px 2px; border-right-color: #ddd; border-bottom-color: #ddd; }
.treebox .hbar { grid-column: 1 / 3; padding: 0 27px 0 5px; }
.treeview { overflow: hidden; background: #fff; padding-left: 4px; }
.tree ul { margin-left: 24px; }
.tree, .tree ul { background: repeating-linear-gradient(#888 0 1px, #fff 1px 2px) 5px 0 / 1px 100% no-repeat; }
.tree { background-position: 5px 10px; }
.tree ul.only { background-size: 1px 10px; }
.tree ul.leaves { background-size: 1px calc(100% - 10px); }
.row { display: flex; align-items: center; height: 20px; white-space: nowrap; }
.ex { width: 11px; height: 11px; flex: none; border: 1px solid #808080; background: #fff; font: bold 11px/8px "Liberation Mono", monospace; text-align: center; }
.dots { width: 7px; height: 1px; flex: none; background: repeating-linear-gradient(90deg, #888 0 1px, #fff 1px 2px); }
.dots.solo { width: 13px; margin-left: 5px; }
.leaves .dots { width: 14px; margin-left: 5px; }
.ti { width: 20px; height: 20px; margin-right: 3px; }
.tm { width: 10px; height: 20px; margin: 0 9px 0 3px; }
.row span { padding: 0 2px; }
.row .cur { background: #f0f0f0; }
.info { height: 76px; display: flex; gap: 4px; padding-top: 3px; }
.infotext { flex: 1; border: solid var(--shade); border-width: 2px 1px 1px 2px; border-right-color: #fff; border-bottom-color: #fff; }
.info button { width: 29px; height: 29px; }

.status { height: 25px; flex: none; display: flex; align-items: center; gap: 4px; padding: 3px 0 1px 2px; border-top: 1px solid #fff; }
.status span { flex: 1; }
.cell { height: 21px; border: solid #999; border-width: 1px 1px 0 1px; border-right-color: #fff; }
.s1 { width: 123px; } .s2 { width: 144px; } .s3 { width: 34px; padding-left: 1px; }

.taskbar { height: 50px; flex: none; display: flex; background: #010307; color: #fff; }
.tb { width: 60px; height: 50px; display: grid; place-items: center; }
.tb.run { width: 51px; border-bottom: 3px solid #76b9ed; padding-top: 1px; }
.tb.first { margin: 0 6px 0 8px; }
.tb.active { width: 61px; background: #36373c; margin-right: 6px; }
.tray { margin-left: auto; display: flex; align-items: center; gap: 10px; border-right: 1px solid #555; margin-right: 5px; height: 50px; }
.tray svg:first-child { margin-right: 2px; }
.lang { font-size: 18px; margin-right: 7px; }
.m { width: 18px; height: 18px; background: #fff; color: #000; font: 16px/18px var(--ui); text-align: center; }
.clock { display: flex; flex-direction: column; align-items: center; width: 84px; margin: 0 4px 4px 9px; line-height: 21px; }

.dialog { position: absolute; left: calc(50% - 379px); top: 166px; width: 760px; background: var(--face); border: 1px solid #1883d7; border-right-color: #aaa; border-bottom-color: #667; box-shadow: 0 4px 18px rgba(0, 0, 0, .35); line-height: 22px; }
.dtitle { height: 32px; display: flex; align-items: center; justify-content: space-between; padding: 0 13px 2px 4px; background: #fff; }
.dtitle button { width: 14px; height: 14px; }
.dbody { padding: 11px 7px 11px 9px; }
.tab { width: 73px; height: 30px; display: block; border: solid #fff; border-width: 1px 2px 0 1px; border-right-color: #888; padding-bottom: 2px; text-align: center; }
.panel { border: solid #fff; border-width: 1px 2px 2px 1px; border-right-color: #777; border-bottom-color: #777; padding: 8px 19px 22px; margin-right: 1px; }
.r1 { display: flex; align-items: center; }
.r1 label { width: 175px; padding-top: 12px; }
.r1 .combo { width: 182px; }
.btn { width: 110px; height: 38px; border: solid; border-width: 1px 2px 2px 1px; border-color: #fff #868686 #868686 #fff; background: var(--face); }
.r1 .btn { width: 141px; margin-left: auto; }
fieldset { margin: 202px 0 0; padding: 7px 0 10px 13px; border: 1px solid #b5b5b5; box-shadow: 0 1px #fff; }
legend { padding: 0 6px 0 3px; margin-left: -6px; line-height: 22px; }
legend + .grid { display: grid; grid-template: 26px 32px 32px 44px / 81px 96px 88px 146px 1fr; align-items: center; }
.top { align-self: start; }
.top.a { grid-column: 2; }
.grid input, .vendor input { height: 31px; background: #fff; border: solid var(--shade); border-width: 2px 1px 1px 2px; border-right-color: #ddd; border-bottom-color: #ddd; padding: 0 3px; }
.grid .addr { width: 69px; }
.grid .spin { width: 60px; height: 31px; display: flex; background: #fff; border: solid var(--shade); border-width: 2px 1px 1px 2px; }
.grid .spin input { flex: 1; min-width: 0; height: auto; border: 0; }
.spin span { width: 20px; display: flex; flex-direction: column; }
.spin button { flex: 1; background: var(--face); border: solid; border-width: 1px 1px 2px 1px; border-color: #fff #888 #888 #fff; display: grid; place-items: center; }
.unit { width: 121px; } .cons { width: 139px; } .pi { width: 224px; grid-column: 3 / 5; }
.grid .end { grid-column: 2 / 6; }
.grid .wide { width: auto; grid-column: 1 / 3; }
.dis { color: #a2a2a2; text-shadow: 1px 1px #fff; }
.vendor { display: flex; align-items: center; margin-top: 21px; }
.vendor label { width: 279px; }
.vendor input { flex: 1; min-width: 0; }
.panel p { margin-top: 6px; }
.check { display: flex; align-items: center; gap: 9px; margin-top: 14px; }
.check input { appearance: none; width: 14px; height: 14px; border: solid #888; border-width: 2px 1px 1px 2px; border-right-color: #fff; border-bottom-color: #fff; }
.dbtns { display: flex; gap: 9px; margin-top: 10px; }
.dbtns .ok { margin-right: auto; margin-left: -1px; border-color: #777; box-shadow: inset 1px 1px #fff; }
.mark { position: absolute; border: 4px solid #ff2014; border-radius: 5px; }
.m1 { left: 136px; top: 55px; width: 290px; height: 103px; }
.m2 { left: 98px; top: 349px; width: 205px; height: 83px; }
.m3 { left: 312px; top: 358px; width: 127px; height: 67px; }

.ime { position: absolute; right: 355px; bottom: 257px; width: 139px; height: 30px; display: flex; align-items: center; justify-content: space-between; padding: 0 8px 0 7px; border-radius: 5px; background: #333; color: #ccc; font: 20px/28px "Noto Sans CJK SC", sans-serif; }
.sogou { position: absolute; right: 0; bottom: 60px; width: 90px; height: 27px; display: flex; align-items: center; gap: 10px; padding: 0 4px; background: #fff; font: 15px/20px var(--song); }
.sogou i { height: 22px; border-left: 2px dotted #aaa; }
.watermark { position: absolute; right: 15px; bottom: 8px; font-size: 14px; color: rgba(190, 190, 190, .7); }
```
